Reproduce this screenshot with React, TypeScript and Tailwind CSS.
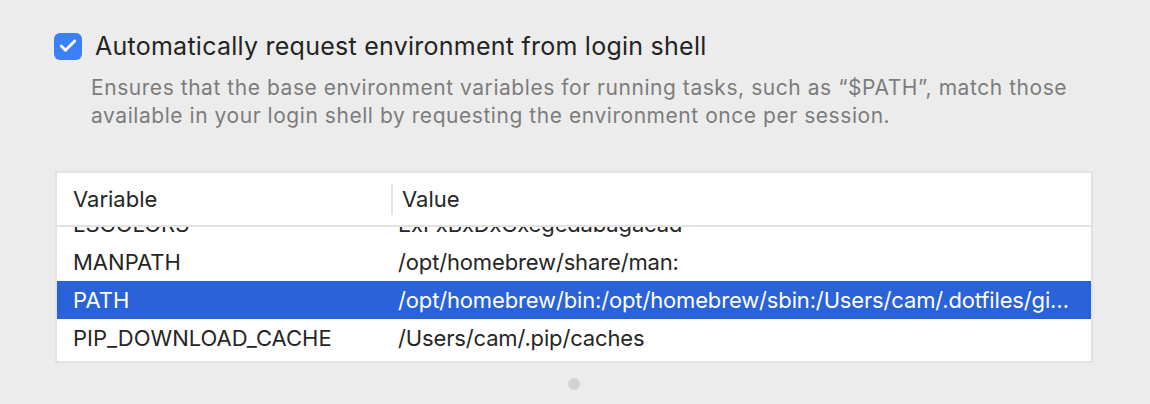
import { Check } from 'lucide-react'

type Row = { name: string; value: string; selected?: boolean }

const rows: Row[] = [
  { name: 'LSCOLORS', value: 'ExFxBxDxCxegedabagacad' },
  { name: 'MANPATH', value: '/opt/homebrew/share/man:' },
  {
    name: 'PATH',
    value: '/opt/homebrew/bin:/opt/homebrew/sbin:/Users/cam/.dotfiles/git/bin:/usr/local/bin:/usr/bin:/bin',
    selected: true,
  },
  { name: 'PIP_DOWNLOAD_CACHE', value: '/Users/cam/.pip/caches' },
]

export default function App() {
  return (
    <div className="h-[404px] w-[1150px] overflow-hidden bg-[#ececec] font-['Inter',sans-serif] antialiased">
      <div className="pl-[54px] pt-[32px]">
        <label className="flex items-center gap-[13px]">
          <span className="flex h-[27px] w-[28px] items-center justify-center rounded-[6px] bg-[#3b80f7]">
            <Check className="h-[20px] w-[20px] text-white" strokeWidth={3.5} />
          </span>
          <span className="text-[25px] leading-[28px] tracking-[0.25px] text-[#242424]">
            Automatically request environment from login shell
          </span>
        </label>
        <p className="ml-[37px] mt-[14px] text-[21px] leading-[28px] tracking-[0.55px] text-[#7c7c7c]">
          Ensures that the base environment variables for running tasks, such as “$PATH”, match those
          <br />
          available in your login shell by requesting the environment once per session.
        </p>
      </div>

      <div className="ml-[55px] mt-[41px] w-[1038px] border-2 border-[#e2e2e2] bg-white text-[22px] text-[#262626]">
        <div className="flex h-[54px] items-center border-b-2 border-[#e2e2e2]">
          <div className="w-[334px] shrink-0 pl-[16px]">Variable</div>
          <div className="h-[31px] w-[2px] bg-[#e4e4e4]" />
          <div className="pl-[9px]">Value</div>
        </div>
        <div className="h-[134px] overflow-hidden">
          <div className="-mt-[22px]">
            {rows.map((r) => (
              <div
                key={r.name}
                className={
                  r.selected
                    ? 'flex h-[38px] items-center bg-[#2962d9] text-white'
                    : 'flex h-[38px] items-center'
                }
              >
                <div className="w-[336px] shrink-0 pl-[16px]">{r.name}</div>
                <div className="min-w-0 flex-1 overflow-hidden text-ellipsis whitespace-nowrap pl-[5px] pr-[16px] tracking-[-0.15px]">
                  {r.value}
                </div>
              </div>
            ))}
          </div>
        </div>
      </div>

      <div className="ml-[568px] mt-[15px] h-[12px] w-[12px] rounded-full bg-[#d2d2d2]" />
    </div>
  )
}
